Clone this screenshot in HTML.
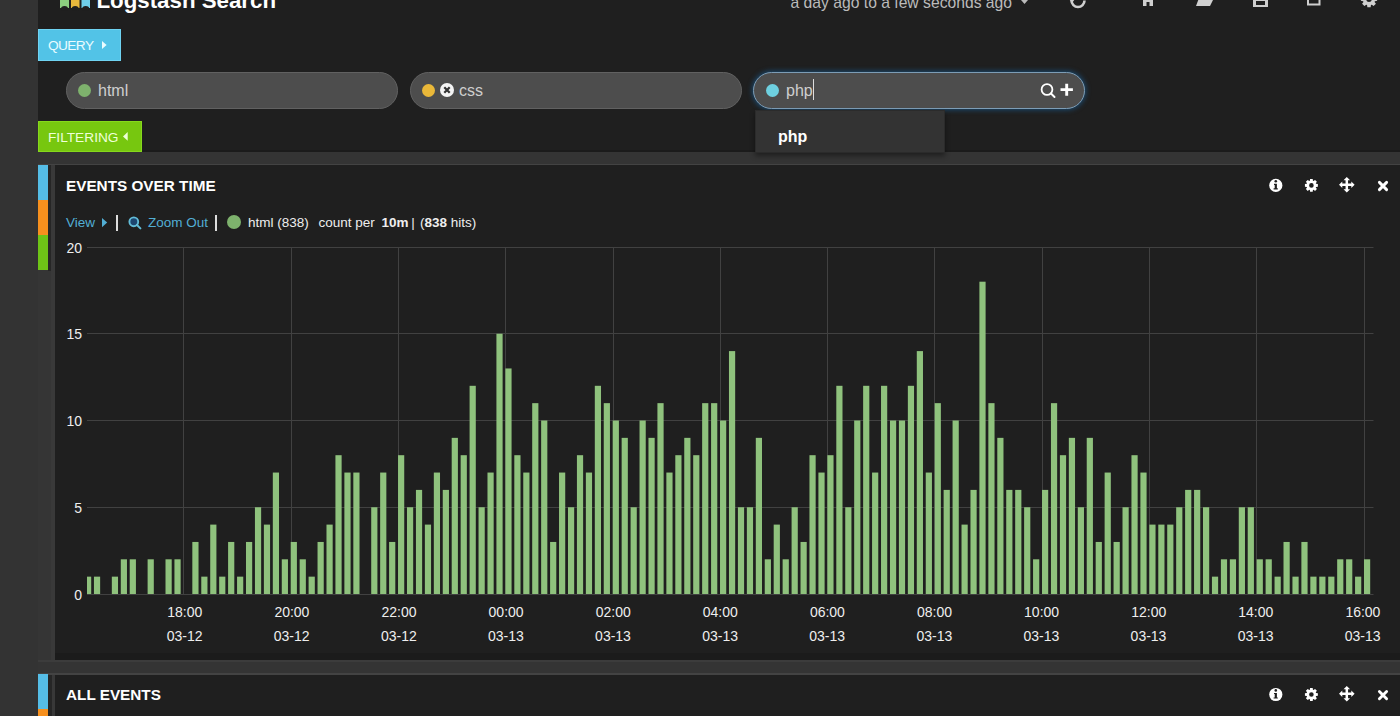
<!DOCTYPE html>
<html><head><meta charset="utf-8">
<style>
*{margin:0;padding:0;box-sizing:border-box}
html,body{width:1400px;height:716px;overflow:hidden;background:#1f1f1f;font-family:"Liberation Sans",sans-serif;color:#ddd;position:relative}
.a{position:absolute;white-space:nowrap}
svg.a{overflow:visible}
#lstrip{left:0;top:0;width:38px;height:716px;background:#333}
#title{left:96.4px;top:-14.2px;font-size:22.3px;font-weight:bold;line-height:30px;color:#fff}
#timetxt{left:790.5px;top:-7.3px;font-size:15.7px;line-height:20px;color:#bbb}
.lbl{font-size:13.7px;line-height:20px;padding-left:10px}
#qlbl{left:38px;top:29px;width:83px;height:32px;background:#52c3e7;border:1px solid #6fd3f2;color:#eafcff;padding-top:6px;padding-left:9px;letter-spacing:-0.6px}
#flbl{left:38px;top:121px;width:104px;height:31px;background:#77c70f;border:1px solid #86d81c;color:#efffd8;padding-top:5.5px;padding-left:9px;z-index:1}
.pill{top:72px;height:37px;width:332px;border-radius:19px;background:#4d4d4d;border:1px solid #616161}
.dot{width:13px;height:13px;border-radius:50%}
.ptxt{font-size:16px;line-height:20px;color:#cfcfcf}
.band{left:38px;width:1362px;background:#343434}
.panel{left:55px;width:1345px;background:#1f1f1f}
.strip{left:38px;width:10px}
.ptitle{left:66px;font-size:15.3px;font-weight:bold;color:#fff;line-height:18px}
.link{font-size:13.5px;line-height:16px;color:#52aed4}
.tb{font-size:13.5px;line-height:16px;color:#eee}
</style></head><body>
<div id="lstrip" class="a"></div>

<!-- header -->
<svg class="a" style="left:58px;top:-8.5px" width="34" height="20">
  <rect x="2" y="0" width="9" height="16" fill="#8ccf7f"/>
  <rect x="13" y="0" width="8.5" height="16" fill="#e8b83c"/>
  <rect x="23.5" y="0" width="8.5" height="16" fill="#6fcfea"/>
  <ellipse cx="6.5" cy="16.5" rx="3.5" ry="2.5" fill="#1f1f1f"/>
  <ellipse cx="17.2" cy="16.5" rx="3.5" ry="2.5" fill="#1f1f1f"/>
  <ellipse cx="27.7" cy="16.5" rx="3.5" ry="2.5" fill="#1f1f1f"/>
</svg>
<div id="title" class="a">Logstash Search</div>
<div id="timetxt" class="a">a day ago to a few seconds ago</div>
<svg class="a" style="left:0;top:0" width="1400" height="30"><g fill="#cfcfcf"><path d="M1071.5 0.5 A6.5 6.5 0 0 0 1084.5 0.5" fill="none" stroke="#cfcfcf" stroke-width="2.6"/><path d="M1069 -1H1075L1072 3Z"/><path d="M1143 -4H1153V6H1149.5V2H1146.5V6H1143Z"/><path d="M1199 -2H1214L1210 6H1196Z"/><path d="M1253 -6H1268V7H1253ZM1256 1V5H1265V1Z" fill-rule="evenodd"/><path d="M1307 -6V5.5H1320.5V-6H1318.5V3.5H1309V-6Z"/></g><path fill-rule="evenodd" d="M1377.13,-2.45 L1377.13,0.85 L1374.89,1.15 L1374.54,1.98 L1375.92,3.79 L1373.59,6.12 L1371.78,4.74 L1370.95,5.09 L1370.65,7.33 L1367.35,7.33 L1367.05,5.09 L1366.22,4.74 L1364.41,6.12 L1362.08,3.79 L1363.46,1.98 L1363.11,1.15 L1360.87,0.85 L1360.87,-2.45 L1363.11,-2.75 L1363.46,-3.58 L1362.08,-5.39 L1364.41,-7.72 L1366.22,-6.34 L1367.05,-6.69 L1367.35,-8.93 L1370.65,-8.93 L1370.95,-6.69 L1371.78,-6.34 L1373.59,-7.72 L1375.92,-5.39 L1374.54,-3.58 L1374.89,-2.75Z M1371.8,-0.8 A2.8,2.8 0 1,0 1366.2,-0.8 A2.8,2.8 0 1,0 1371.8,-0.8Z" fill="#cfcfcf"/><path d="M1021 0H1028L1024.5 4Z" fill="#bbb"/></svg>

<!-- query row -->
<div id="qlbl" class="a lbl">QUERY</div>
<svg class="a" style="left:102px;top:41px" width="5" height="8"><path d="M0 0L4.6 4L0 8Z" fill="#eafcff"/></svg>
<div class="a pill" style="left:66px"></div>
<div class="a dot" style="left:78px;top:84px;background:#7eb26d"></div>
<div class="a ptxt" style="left:98px;top:81px">html</div>
<div class="a pill" style="left:410px"></div>
<div class="a dot" style="left:422px;top:84px;background:#eab839"></div>
<svg class="a" style="left:440px;top:83px" width="14" height="14"><circle cx="7" cy="7" r="7" fill="#f4f4f4"/><path d="M4.3 4.3L9.7 9.7M9.7 4.3L4.3 9.7" stroke="#333" stroke-width="2.2"/></svg>
<div class="a ptxt" style="left:459px;top:81px">css</div>
<div class="a pill" style="left:753px;border-color:#7d9db6;box-shadow:0 0 5px 1px #1b4a70"></div>
<div class="a dot" style="left:766px;top:84px;background:#6ed0e0"></div>
<div class="a ptxt" style="left:786px;top:81px">php</div>
<div class="a" style="left:813px;top:79px;width:1px;height:21px;background:#ddd"></div>
<svg class="a" style="left:1040px;top:83px" width="18" height="16"><circle cx="7" cy="6.5" r="5.4" fill="none" stroke="#fff" stroke-width="1.8"/><path d="M11 10.5L14.5 14" stroke="#fff" stroke-width="2" stroke-linecap="round"/></svg>
<svg class="a" style="left:1060px;top:83px" width="14" height="14"><path d="M6.7 0.8V12.8M0.5 6.6H12.9" stroke="#fff" stroke-width="2.9"/></svg>
<!-- dropdown -->
<div class="a" style="left:754.5px;top:110px;width:190px;height:43px;background:#333;border:1px solid #2b2b2b;box-shadow:0 3px 5px rgba(0,0,0,.4);z-index:2"></div>
<div class="a" style="left:778px;top:127px;z-index:3;font-size:16px;line-height:20px;font-weight:bold;color:#fff">php</div>

<div id="flbl" class="a lbl">FILTERING</div>
<svg class="a" style="left:123px;top:132px;z-index:2" width="5" height="9"><path d="M4.7 0L0 4.4L4.7 8.8Z" fill="#efffd8"/></svg>

<!-- bands -->
<div class="a" style="left:38px;width:1362px;top:150px;height:2px;background:#1b1b1b"></div>
<div class="a band" style="top:152px;height:12px"></div>
<div class="a" style="left:38px;width:1362px;top:164px;height:1px;background:#434343"></div>
<div class="a" style="left:55px;width:1345px;top:653px;height:7px;background:#1b1b1b"></div>
<div class="a band" style="top:660px;height:13px;border-top:2px solid #3c3c3c"></div>
<div class="a" style="left:38px;width:1362px;top:673px;height:1.5px;background:#434343"></div>

<!-- panel 1 -->
<div class="a" style="left:38px;top:165px;width:17px;height:495px;background:#353535"></div><div class="a" style="left:48px;top:165px;width:3px;height:106px;background:#262626"></div><div class="a" style="left:51px;top:165px;width:4px;height:495px;background:#393939"></div>
<div class="a strip" style="top:165px;height:35px;background:#55bde6"></div>
<div class="a strip" style="top:200px;height:35px;background:#f7901e"></div>
<div class="a strip" style="top:235px;height:35px;background:#6ec417"></div>
<div class="a panel" style="top:165px;height:488px"></div>
<div class="a ptitle" style="top:177px">EVENTS OVER TIME</div>
<svg class="a" style="left:0;top:0" width="1400" height="716"><circle cx="1275.8" cy="185.4" r="6.6" fill="#fff"/><circle cx="1275.8" cy="181.3" r="1.3" fill="#1f1f1f"/><path d="M1274.0 183.8H1276.8999999999999V188.3H1277.8V189.5H1273.6V188.3H1274.7V185.0H1274.0Z" fill="#1f1f1f"/><path fill-rule="evenodd" d="M1317.87,184.09 L1317.87,186.71 L1316.05,186.94 L1315.78,187.60 L1316.90,189.05 L1315.05,190.90 L1313.60,189.78 L1312.94,190.05 L1312.71,191.87 L1310.09,191.87 L1309.86,190.05 L1309.20,189.78 L1307.75,190.90 L1305.90,189.05 L1307.02,187.60 L1306.75,186.94 L1304.93,186.71 L1304.93,184.09 L1306.75,183.86 L1307.02,183.20 L1305.90,181.75 L1307.75,179.90 L1309.20,181.02 L1309.86,180.75 L1310.09,178.93 L1312.71,178.93 L1312.94,180.75 L1313.60,181.02 L1315.05,179.90 L1316.90,181.75 L1315.78,183.20 L1316.05,183.86Z M1313.7,185.4 A2.3,2.3 0 1,0 1309.1000000000001,185.4 A2.3,2.3 0 1,0 1313.7,185.4Z" fill="#fff"/><path d="M1346.8 176.9L1350.1 180.20000000000002H1348.05V183.45000000000002H1351.3V181.4L1354.6 184.70000000000002L1351.3 188.00000000000003V185.95000000000002H1348.05V189.20000000000002H1350.1L1346.8 192.50000000000003L1343.5 189.20000000000002H1345.55V185.95000000000002H1342.3V188.00000000000003L1339.0 184.70000000000002L1342.3 181.4V183.45000000000002H1345.55V180.20000000000002H1343.5Z" fill="#fff"/><path d="M1379.4 182.4L1386.6 189.6M1386.6 182.4L1379.4 189.6" stroke="#fff" stroke-width="2.9" stroke-linecap="round"/></svg>
<div class="a link" style="left:66px;top:214.5px">View</div>
<svg class="a" style="left:102px;top:217.5px" width="6" height="10"><path d="M0 0L5.2 4.6L0 9.2Z" fill="#52aed4"/></svg>
<div class="a" style="left:115.5px;top:214.5px;width:2px;height:16px;background:#ddd"></div>
<svg class="a" style="left:127.5px;top:216.3px" width="15" height="15"><circle cx="5.8" cy="5.8" r="4.4" fill="#1d4670" stroke="#62bcd8" stroke-width="1.9"/><path d="M9 9L12.4 12.4" stroke="#62bcd8" stroke-width="2" stroke-linecap="round"/></svg>
<div class="a link" style="left:148px;top:214.5px">Zoom Out</div>
<div class="a" style="left:214.5px;top:214.5px;width:2px;height:16px;background:#ddd"></div>
<div class="a dot" style="left:227px;top:215px;width:14px;height:14px;background:#7eb26d"></div>
<div class="a tb" style="left:248px;top:214.5px">html (838)</div><div class="a tb" style="left:318.5px;top:214.5px">count per</div><div class="a tb" style="left:381.5px;top:214.5px"><b>10m</b></div><div class="a tb" style="left:411.3px;top:214.5px">|</div><div class="a tb" style="left:420px;top:214.5px">(<b>838</b> hits)</div>

<svg class="a" id="chart" style="left:0;top:0" width="1400" height="716"><g stroke="#414141" stroke-width="1" fill="none"><line x1="87.0" y1="594.5" x2="1373.5" y2="594.5"/><line x1="87.0" y1="507.5" x2="1373.5" y2="507.5"/><line x1="87.0" y1="420.5" x2="1373.5" y2="420.5"/><line x1="87.0" y1="333.5" x2="1373.5" y2="333.5"/><line x1="87.0" y1="247.5" x2="1373.5" y2="247.5"/><line x1="183.5" y1="247" x2="183.5" y2="594"/><line x1="291.5" y1="247" x2="291.5" y2="594"/><line x1="398.5" y1="247" x2="398.5" y2="594"/><line x1="505.5" y1="247" x2="505.5" y2="594"/><line x1="613.5" y1="247" x2="613.5" y2="594"/><line x1="720.5" y1="247" x2="720.5" y2="594"/><line x1="827.5" y1="247" x2="827.5" y2="594"/><line x1="934.5" y1="247" x2="934.5" y2="594"/><line x1="1042.5" y1="247" x2="1042.5" y2="594"/><line x1="1149.5" y1="247" x2="1149.5" y2="594"/><line x1="1256.5" y1="247" x2="1256.5" y2="594"/><line x1="1364.5" y1="247" x2="1364.5" y2="594"/></g>
<g fill="#8fc27d"><rect x="87.00" y="576.65" width="4.20" height="17.35"/><rect x="93.94" y="576.65" width="6.20" height="17.35"/><rect x="111.83" y="576.65" width="6.20" height="17.35"/><rect x="120.78" y="559.30" width="6.20" height="34.70"/><rect x="129.72" y="559.30" width="6.20" height="34.70"/><rect x="147.61" y="559.30" width="6.20" height="34.70"/><rect x="165.50" y="559.30" width="6.20" height="34.70"/><rect x="174.44" y="559.30" width="6.20" height="34.70"/><rect x="192.33" y="541.95" width="6.20" height="52.05"/><rect x="201.27" y="576.65" width="6.20" height="17.35"/><rect x="210.22" y="524.60" width="6.20" height="69.40"/><rect x="219.16" y="576.65" width="6.20" height="17.35"/><rect x="228.10" y="541.95" width="6.20" height="52.05"/><rect x="237.05" y="576.65" width="6.20" height="17.35"/><rect x="245.99" y="541.95" width="6.20" height="52.05"/><rect x="254.94" y="507.25" width="6.20" height="86.75"/><rect x="263.88" y="524.60" width="6.20" height="69.40"/><rect x="272.82" y="472.55" width="6.20" height="121.45"/><rect x="281.77" y="559.30" width="6.20" height="34.70"/><rect x="290.71" y="541.95" width="6.20" height="52.05"/><rect x="299.66" y="559.30" width="6.20" height="34.70"/><rect x="308.60" y="576.65" width="6.20" height="17.35"/><rect x="317.54" y="541.95" width="6.20" height="52.05"/><rect x="326.49" y="524.60" width="6.20" height="69.40"/><rect x="335.43" y="455.20" width="6.20" height="138.80"/><rect x="344.38" y="472.55" width="6.20" height="121.45"/><rect x="353.32" y="472.55" width="6.20" height="121.45"/><rect x="371.21" y="507.25" width="6.20" height="86.75"/><rect x="380.15" y="472.55" width="6.20" height="121.45"/><rect x="389.10" y="541.95" width="6.20" height="52.05"/><rect x="398.04" y="455.20" width="6.20" height="138.80"/><rect x="406.98" y="507.25" width="6.20" height="86.75"/><rect x="415.93" y="489.90" width="6.20" height="104.10"/><rect x="424.87" y="524.60" width="6.20" height="69.40"/><rect x="433.82" y="472.55" width="6.20" height="121.45"/><rect x="442.76" y="489.90" width="6.20" height="104.10"/><rect x="451.70" y="437.85" width="6.20" height="156.15"/><rect x="460.65" y="455.20" width="6.20" height="138.80"/><rect x="469.59" y="385.80" width="6.20" height="208.20"/><rect x="478.54" y="507.25" width="6.20" height="86.75"/><rect x="487.48" y="472.55" width="6.20" height="121.45"/><rect x="496.42" y="333.75" width="6.20" height="260.25"/><rect x="505.37" y="368.45" width="6.20" height="225.55"/><rect x="514.31" y="455.20" width="6.20" height="138.80"/><rect x="523.26" y="472.55" width="6.20" height="121.45"/><rect x="532.20" y="403.15" width="6.20" height="190.85"/><rect x="541.14" y="420.50" width="6.20" height="173.50"/><rect x="550.09" y="541.95" width="6.20" height="52.05"/><rect x="559.03" y="472.55" width="6.20" height="121.45"/><rect x="567.98" y="507.25" width="6.20" height="86.75"/><rect x="576.92" y="455.20" width="6.20" height="138.80"/><rect x="585.86" y="472.55" width="6.20" height="121.45"/><rect x="594.81" y="385.80" width="6.20" height="208.20"/><rect x="603.75" y="403.15" width="6.20" height="190.85"/><rect x="612.70" y="420.50" width="6.20" height="173.50"/><rect x="621.64" y="437.85" width="6.20" height="156.15"/><rect x="630.58" y="507.25" width="6.20" height="86.75"/><rect x="639.53" y="420.50" width="6.20" height="173.50"/><rect x="648.47" y="437.85" width="6.20" height="156.15"/><rect x="657.42" y="403.15" width="6.20" height="190.85"/><rect x="666.36" y="472.55" width="6.20" height="121.45"/><rect x="675.30" y="455.20" width="6.20" height="138.80"/><rect x="684.25" y="437.85" width="6.20" height="156.15"/><rect x="693.19" y="455.20" width="6.20" height="138.80"/><rect x="702.14" y="403.15" width="6.20" height="190.85"/><rect x="711.08" y="403.15" width="6.20" height="190.85"/><rect x="720.02" y="420.50" width="6.20" height="173.50"/><rect x="728.97" y="351.10" width="6.20" height="242.90"/><rect x="737.91" y="507.25" width="6.20" height="86.75"/><rect x="746.86" y="507.25" width="6.20" height="86.75"/><rect x="755.80" y="437.85" width="6.20" height="156.15"/><rect x="764.74" y="559.30" width="6.20" height="34.70"/><rect x="773.69" y="524.60" width="6.20" height="69.40"/><rect x="782.63" y="559.30" width="6.20" height="34.70"/><rect x="791.58" y="507.25" width="6.20" height="86.75"/><rect x="800.52" y="541.95" width="6.20" height="52.05"/><rect x="809.46" y="455.20" width="6.20" height="138.80"/><rect x="818.41" y="472.55" width="6.20" height="121.45"/><rect x="827.35" y="455.20" width="6.20" height="138.80"/><rect x="836.30" y="385.80" width="6.20" height="208.20"/><rect x="845.24" y="507.25" width="6.20" height="86.75"/><rect x="854.18" y="420.50" width="6.20" height="173.50"/><rect x="863.13" y="385.80" width="6.20" height="208.20"/><rect x="872.07" y="472.55" width="6.20" height="121.45"/><rect x="881.02" y="385.80" width="6.20" height="208.20"/><rect x="889.96" y="420.50" width="6.20" height="173.50"/><rect x="898.90" y="420.50" width="6.20" height="173.50"/><rect x="907.85" y="385.80" width="6.20" height="208.20"/><rect x="916.79" y="351.10" width="6.20" height="242.90"/><rect x="925.74" y="472.55" width="6.20" height="121.45"/><rect x="934.68" y="403.15" width="6.20" height="190.85"/><rect x="943.62" y="489.90" width="6.20" height="104.10"/><rect x="952.57" y="420.50" width="6.20" height="173.50"/><rect x="961.51" y="524.60" width="6.20" height="69.40"/><rect x="970.46" y="489.90" width="6.20" height="104.10"/><rect x="979.40" y="281.70" width="6.20" height="312.30"/><rect x="988.34" y="403.15" width="6.20" height="190.85"/><rect x="997.29" y="437.85" width="6.20" height="156.15"/><rect x="1006.23" y="489.90" width="6.20" height="104.10"/><rect x="1015.18" y="489.90" width="6.20" height="104.10"/><rect x="1024.12" y="507.25" width="6.20" height="86.75"/><rect x="1033.06" y="559.30" width="6.20" height="34.70"/><rect x="1042.01" y="489.90" width="6.20" height="104.10"/><rect x="1050.95" y="403.15" width="6.20" height="190.85"/><rect x="1059.90" y="455.20" width="6.20" height="138.80"/><rect x="1068.84" y="437.85" width="6.20" height="156.15"/><rect x="1077.78" y="507.25" width="6.20" height="86.75"/><rect x="1086.73" y="437.85" width="6.20" height="156.15"/><rect x="1095.67" y="541.95" width="6.20" height="52.05"/><rect x="1104.62" y="472.55" width="6.20" height="121.45"/><rect x="1113.56" y="541.95" width="6.20" height="52.05"/><rect x="1122.50" y="507.25" width="6.20" height="86.75"/><rect x="1131.45" y="455.20" width="6.20" height="138.80"/><rect x="1140.39" y="472.55" width="6.20" height="121.45"/><rect x="1149.34" y="524.60" width="6.20" height="69.40"/><rect x="1158.28" y="524.60" width="6.20" height="69.40"/><rect x="1167.22" y="524.60" width="6.20" height="69.40"/><rect x="1176.17" y="507.25" width="6.20" height="86.75"/><rect x="1185.11" y="489.90" width="6.20" height="104.10"/><rect x="1194.06" y="489.90" width="6.20" height="104.10"/><rect x="1203.00" y="507.25" width="6.20" height="86.75"/><rect x="1211.94" y="576.65" width="6.20" height="17.35"/><rect x="1220.89" y="559.30" width="6.20" height="34.70"/><rect x="1229.83" y="559.30" width="6.20" height="34.70"/><rect x="1238.78" y="507.25" width="6.20" height="86.75"/><rect x="1247.72" y="507.25" width="6.20" height="86.75"/><rect x="1256.66" y="559.30" width="6.20" height="34.70"/><rect x="1265.61" y="559.30" width="6.20" height="34.70"/><rect x="1274.55" y="576.65" width="6.20" height="17.35"/><rect x="1283.50" y="541.95" width="6.20" height="52.05"/><rect x="1292.44" y="576.65" width="6.20" height="17.35"/><rect x="1301.38" y="541.95" width="6.20" height="52.05"/><rect x="1310.33" y="576.65" width="6.20" height="17.35"/><rect x="1319.27" y="576.65" width="6.20" height="17.35"/><rect x="1328.22" y="576.65" width="6.20" height="17.35"/><rect x="1337.16" y="559.30" width="6.20" height="34.70"/><rect x="1346.10" y="559.30" width="6.20" height="34.70"/><rect x="1355.05" y="576.65" width="6.20" height="17.35"/><rect x="1363.99" y="559.30" width="6.20" height="34.70"/></g>
<g fill="#eee" font-family="Liberation Sans" font-size="14"><text x="82" y="599.60" text-anchor="end">0</text><text x="82" y="512.85" text-anchor="end">5</text><text x="82" y="426.10" text-anchor="end">10</text><text x="82" y="339.35" text-anchor="end">15</text><text x="82" y="252.60" text-anchor="end">20</text><text x="184.80" y="617" text-anchor="middle">18:00</text><text x="184.60" y="641" text-anchor="middle">03-12</text><text x="291.90" y="617" text-anchor="middle">20:00</text><text x="291.70" y="641" text-anchor="middle">03-12</text><text x="399.00" y="617" text-anchor="middle">22:00</text><text x="398.80" y="641" text-anchor="middle">03-12</text><text x="506.10" y="617" text-anchor="middle">00:00</text><text x="505.90" y="641" text-anchor="middle">03-13</text><text x="613.20" y="617" text-anchor="middle">02:00</text><text x="613.00" y="641" text-anchor="middle">03-13</text><text x="720.30" y="617" text-anchor="middle">04:00</text><text x="720.10" y="641" text-anchor="middle">03-13</text><text x="827.40" y="617" text-anchor="middle">06:00</text><text x="827.20" y="641" text-anchor="middle">03-13</text><text x="934.50" y="617" text-anchor="middle">08:00</text><text x="934.30" y="641" text-anchor="middle">03-13</text><text x="1041.60" y="617" text-anchor="middle">10:00</text><text x="1041.40" y="641" text-anchor="middle">03-13</text><text x="1148.70" y="617" text-anchor="middle">12:00</text><text x="1148.50" y="641" text-anchor="middle">03-13</text><text x="1255.80" y="617" text-anchor="middle">14:00</text><text x="1255.60" y="641" text-anchor="middle">03-13</text><text x="1362.90" y="617" text-anchor="middle">16:00</text><text x="1362.70" y="641" text-anchor="middle">03-13</text></g></svg>

<!-- panel 2 -->
<div class="a" style="left:38px;top:674.5px;width:17px;height:43px;background:#262626"></div><div class="a" style="left:52px;top:674.5px;width:3px;height:43px;background:#383838"></div>
<div class="a strip" style="top:674px;height:35px;background:#55bde6"></div>
<div class="a strip" style="top:709px;height:7px;background:#f7901e"></div>
<div class="a panel" style="top:674.5px;height:43px"></div>
<div class="a ptitle" style="top:686px">ALL EVENTS</div>
<svg class="a" style="left:0;top:0" width="1400" height="716"><circle cx="1275.8" cy="694.5" r="6.6" fill="#fff"/><circle cx="1275.8" cy="690.4" r="1.3" fill="#1f1f1f"/><path d="M1274.0 692.9H1276.8999999999999V697.4H1277.8V698.6H1273.6V697.4H1274.7V694.1H1274.0Z" fill="#1f1f1f"/><path fill-rule="evenodd" d="M1317.87,693.19 L1317.87,695.81 L1316.05,696.04 L1315.78,696.70 L1316.90,698.15 L1315.05,700.00 L1313.60,698.88 L1312.94,699.15 L1312.71,700.97 L1310.09,700.97 L1309.86,699.15 L1309.20,698.88 L1307.75,700.00 L1305.90,698.15 L1307.02,696.70 L1306.75,696.04 L1304.93,695.81 L1304.93,693.19 L1306.75,692.96 L1307.02,692.30 L1305.90,690.85 L1307.75,689.00 L1309.20,690.12 L1309.86,689.85 L1310.09,688.03 L1312.71,688.03 L1312.94,689.85 L1313.60,690.12 L1315.05,689.00 L1316.90,690.85 L1315.78,692.30 L1316.05,692.96Z M1313.7,694.5 A2.3,2.3 0 1,0 1309.1000000000001,694.5 A2.3,2.3 0 1,0 1313.7,694.5Z" fill="#fff"/><path d="M1346.8 686.0L1350.1 689.3H1348.05V692.55H1351.3V690.5L1354.6 693.8L1351.3 697.0999999999999V695.05H1348.05V698.3H1350.1L1346.8 701.5999999999999L1343.5 698.3H1345.55V695.05H1342.3V697.0999999999999L1339.0 693.8L1342.3 690.5V692.55H1345.55V689.3H1343.5Z" fill="#fff"/><path d="M1379.4 691.5L1386.6 698.7M1386.6 691.5L1379.4 698.7" stroke="#fff" stroke-width="2.9" stroke-linecap="round"/></svg>

</body></html>
